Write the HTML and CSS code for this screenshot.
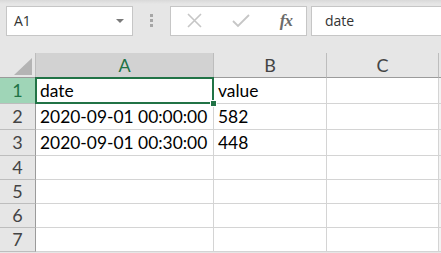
FILE: index.html
```html
<!DOCTYPE html>
<html lang="en">

<head>
    <meta charset="UTF-8">
    <title>Book1 - Excel</title>
    <link rel="stylesheet" href="styles.css">
</head>

<body>
    <div class="formula-bar">
        <div class="name-box">
            <span>A1</span>
            <span class="dropdown"></span>
        </div>
        <div class="grip"><span></span><span></span><span></span></div>
        <div class="fx-buttons">
            <svg class="fx-icon" width="15" height="15" viewBox="0 0 15 15">
                <path d="M1 1 L14 14 M14 1 L1 14" stroke="#c6c6c6" stroke-width="1.6" fill="none" />
            </svg>
            <svg class="fx-icon" width="18" height="14" viewBox="0 0 18 14">
                <path d="M1 7 L6 12 L17 1" stroke="#c6c6c6" stroke-width="1.8" fill="none" />
            </svg>
            <span class="fx">fx</span>
        </div>
        <div class="formula-input">date</div>
    </div>

    <div class="sheet">
        <div class="corner"><span class="corner-tri"></span></div>
        <div class="col-head active">A</div>
        <div class="col-head">B</div>
        <div class="col-head">C</div>
        <div class="col-head edge"></div>

        <div class="row-head active">1</div>
        <div class="cell selected">date<span class="handle"></span></div>
        <div class="cell">value</div>
        <div class="cell"></div>
        <div class="cell edge"></div>

        <div class="row-head">2</div>
        <div class="cell">2020-09-01 00:00:00</div>
        <div class="cell">582</div>
        <div class="cell"></div>
        <div class="cell edge"></div>

        <div class="row-head">3</div>
        <div class="cell">2020-09-01 00:30:00</div>
        <div class="cell">448</div>
        <div class="cell"></div>
        <div class="cell edge"></div>

        <div class="row-head short">4</div>
        <div class="cell short"></div>
        <div class="cell short"></div>
        <div class="cell short"></div>
        <div class="cell short edge"></div>

        <div class="row-head short">5</div>
        <div class="cell short"></div>
        <div class="cell short"></div>
        <div class="cell short"></div>
        <div class="cell short edge"></div>

        <div class="row-head short">6</div>
        <div class="cell short"></div>
        <div class="cell short"></div>
        <div class="cell short"></div>
        <div class="cell short edge"></div>

        <div class="row-head short">7</div>
        <div class="cell short"></div>
        <div class="cell short"></div>
        <div class="cell short"></div>
        <div class="cell short edge"></div>
    </div>
</body>

</html>
```

FILE: styles.css
```css
:root {
    --chrome-bg: #e6e6e6;
    --box-border: #c6c6c6;
    --grid-line: #d4d4d4;
    --head-line: #bdbdbd;
    --head-dark: #9b9b9b;
    --excel-green: #217346;
    --row-active: #9fd5b7;
    --col-active: #d2d2d2;
}

* {
    margin: 0;
    padding: 0;
    box-sizing: border-box;
}

body {
    background-color: var(--chrome-bg);
    width: 441px;
    height: 253px;
    overflow: hidden;
    font-family: Lato, 'Liberation Sans', sans-serif;
}

/* barra de fórmulas */
.formula-bar {
    display: flex;
    align-items: center;
    height: 53px;
    padding: 0 0 12px 6px;
    background: linear-gradient(#d9d9d9 0px, var(--chrome-bg) 4px);
}

.name-box,
.fx-buttons,
.formula-input {
    height: 30px;
    background-color: #fff;
    border: 1px solid var(--box-border);
    display: flex;
    align-items: center;
}

.name-box {
    width: 127px;
    padding: 0 8px 0 7px;
    justify-content: space-between;
    font-family: 'Open Sans', sans-serif;
    font-size: 14px;
    color: #333;
}

.dropdown {
    width: 0;
    height: 0;
    border-left: 4px solid transparent;
    border-right: 4px solid transparent;
    border-top: 4px solid #7a7a7a;
}

.grip {
    width: 37px;
    display: flex;
    flex-direction: column;
    align-items: center;
    gap: 2px;
}

.grip span {
    width: 3px;
    height: 3px;
    background-color: #a6a6a6;
}

.fx-buttons {
    width: 137px;
    padding: 0 14px 0 16px;
    justify-content: space-between;
}

.fx {
    font-family: 'Liberation Serif', serif;
    font-style: italic;
    font-weight: bold;
    font-size: 17px;
    color: #6b6b6b;
    letter-spacing: -1px;
}

.formula-input {
    flex: 1;
    margin-left: 4px;
    border-right: none;
    padding-left: 13px;
    font-family: 'Open Sans', sans-serif;
    font-size: 14px;
    color: #333;
}

/* planilha */
.sheet {
    display: grid;
    grid-template-columns: 36px 178px 113px 112px 2px;
    grid-template-rows: 25px 26px 26px 26px 24px 24px 24px 24px;
    font-size: 17.4px;
    color: #000;
}

.corner,
.col-head,
.row-head {
    background-color: var(--chrome-bg);
    color: #444;
}

.corner {
    border-right: 1px solid var(--head-line);
    border-bottom: 1px solid var(--head-dark);
    position: relative;
}

.corner-tri {
    position: absolute;
    right: 3px;
    bottom: 2px;
    width: 0;
    height: 0;
    border-left: 18px solid transparent;
    border-bottom: 17px solid #b4b4b4;
}

.col-head {
    border-right: 1px solid var(--head-line);
    border-bottom: 1px solid var(--head-dark);
    text-align: center;
    line-height: 24px;
    font-size: 18px;
}

.col-head.active {
    background-color: var(--col-active);
    color: var(--excel-green);
    border-bottom-color: var(--excel-green);
}

.col-head.edge {
    border-right: none;
}

.row-head {
    border-right: 1px solid var(--head-dark);
    border-bottom: 1px solid var(--head-line);
    text-align: center;
    line-height: 25px;
    font-size: 18px;
}

.row-head.short {
    line-height: 23px;
}

.row-head.active {
    background-color: var(--row-active);
    color: var(--excel-green);
    border-right-color: var(--excel-green);
}

.cell {
    background-color: #fff;
    border-right: 1px solid var(--grid-line);
    border-bottom: 1px solid var(--grid-line);
    padding-left: 4px;
    line-height: 25px;
    white-space: nowrap;
}

.cell.edge {
    border-right: none;
    background-color: #f3f3f3;
}

.cell.selected {
    position: relative;
}

.cell.selected::after {
    content: "";
    position: absolute;
    left: -1px;
    top: -1px;
    right: -1px;
    bottom: -1px;
    border: 2px solid var(--excel-green);
}

.handle {
    position: absolute;
    right: -4px;
    bottom: -4px;
    width: 7px;
    height: 7px;
    background-color: var(--excel-green);
    border: 1px solid #fff;
    z-index: 1;
}
```
